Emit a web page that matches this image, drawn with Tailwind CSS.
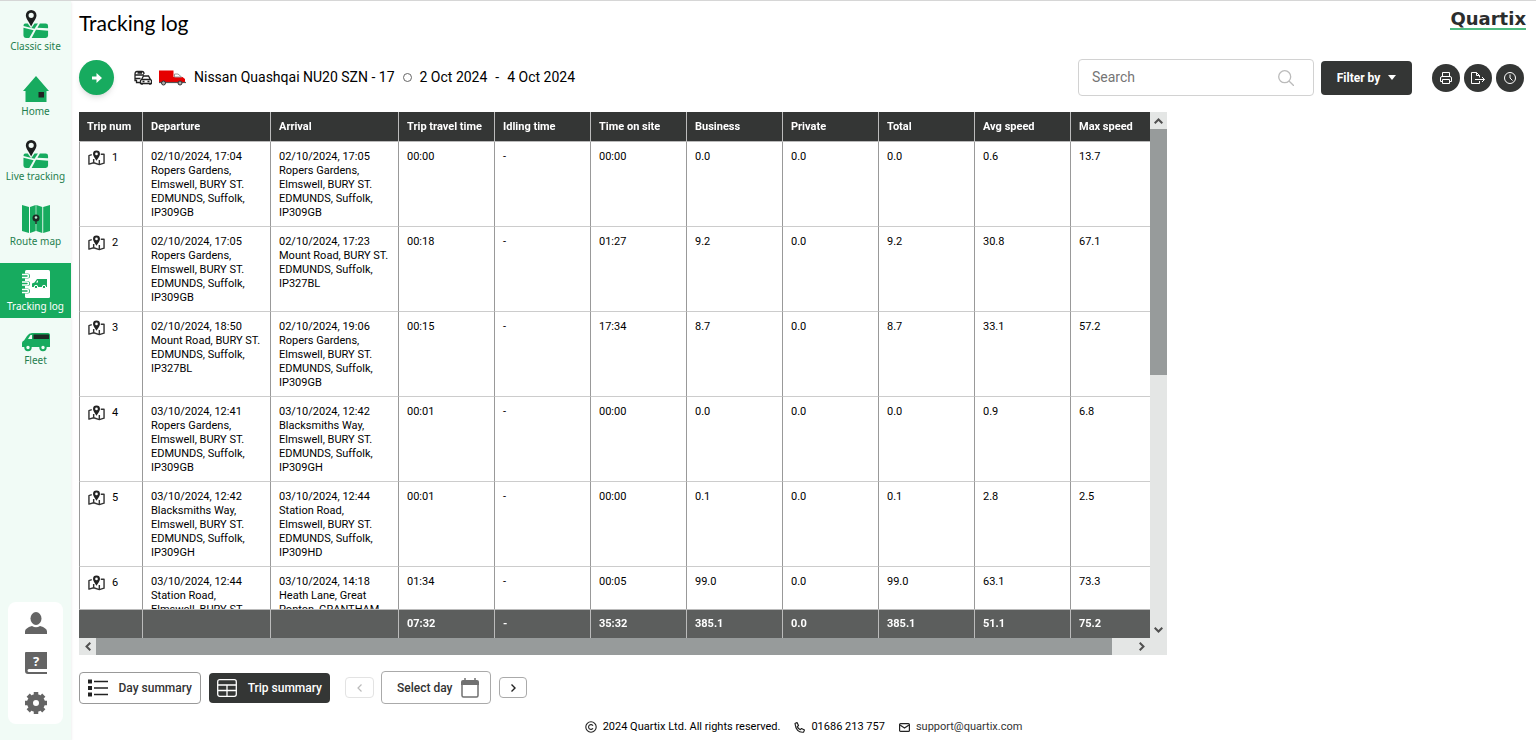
<!DOCTYPE html>
<html lang="en">

<head>
    <meta charset="UTF-8">
    <meta name="viewport" content="width=device-width, initial-scale=1.0">
    <title>Tracking log - Quartix</title>
    <script src="https://cdn.jsdelivr.net/npm/@tailwindcss/browser@4"></script>
</head>

<body class="h-screen flex overflow-hidden border-t border-[#d6d6d6] bg-white font-['Roboto',sans-serif] text-black">
    <!-- shared icons -->
    <svg class="hidden">
        <symbol id="i-tracking" viewBox="0 0 26 29">
            <path fill="#17ab5f" d="M2 14h2.500L8 19l3.500-5H15l-3.500 5.500L0 16.500Q0 14 2 14zM17 14h6q2.500 0 2.500 2.500V19l-11-.500zM0 18.500l10.500 2.500L6 29H2.500Q0 29 0 26.500zM13 20.500l12.500 1v5q0 2.500-2.500 2.500H8.500z" />
            <path fill="#1d1f1f" fill-rule="evenodd" d="M8 0a5.500 5.500 0 0 1 5.500 5.600c0 3-3 6-5.500 11.400C5.500 11.600 2.500 8.600 2.500 5.600A5.500 5.500 0 0 1 8 0zm0 2.800a2.700 2.700 0 1 0 0 5.400 2.700 2.700 0 0 0 0-5.400z" />
        </symbol>
        <symbol id="i-mappin" viewBox="0 0 18 16">
            <path fill="none" stroke="#333" stroke-width="1.500" stroke-linejoin="round" d="M4 4.500 1 5.500v9L6 13l6 2 5-1.500V4h-3.500M6 9v4M12 10v5" />
            <path fill="#222" fill-rule="evenodd" d="M9 0a3.700 3.700 0 0 1 3.700 3.700C12.700 6 10.500 8 9 11 7.500 8 5.300 6 5.300 3.700A3.700 3.700 0 0 1 9 0zm0 2.300a1.400 1.400 0 1 0 0 2.800 1.400 1.400 0 0 0 0-2.800z" />
        </symbol>
    </svg>

    <nav class="w-[71px] shrink-0 flex flex-col justify-between bg-[#f1fbf6] shadow text-[10px] leading-4 text-[#1f7f4f] text-center font-['Noto_Sans',sans-serif]">
        <div class="flex flex-col gap-2.5 pt-0.5">
            <a href="#" class="flex flex-col items-center pt-[7px] pb-1">
                <svg class="w-[26px] h-7"><use href="#i-tracking" /></svg>
                Classic site
            </a>
            <a href="#" class="flex flex-col items-center pt-[7px] pb-1">
                <svg class="w-[26px] h-7" viewBox="0 0 26 28">
                    <path fill="#17ab5f" d="M13 1 26 16h-2.500v11h-21V16H0z" />
                    <path fill="#222" d="M15.500 17h5.500v5.500h-5.500z" />
                </svg>
                Home
            </a>
            <a href="#" class="flex flex-col items-center pt-[7px] pb-1">
                <svg class="w-[26px] h-7"><use href="#i-tracking" /></svg>
                Live tracking
            </a>
            <a href="#" class="flex flex-col items-center pt-[7px] pb-1">
                <svg class="w-7 h-7" viewBox="0 0 28 28">
                    <path fill="#17ab5f" d="M0 0l7 2v26l-7-2zM8 2l5.700-2v26L8 28zM14.300 0l6 2v26l-6-2zM21.200 2 28 0v26l-6.800 2z" />
                    <circle cx="14" cy="13" r="3.500" fill="#1d2a24" />
                    <circle cx="14" cy="12.500" r="1.300" fill="#bfe8d2" />
                    <path stroke="#1d2a24" stroke-width="1.500" d="M14 15v4" />
                </svg>
                Route map
            </a>
            <a href="#" class="flex flex-col items-center pt-[7px] pb-1 bg-[#17ab5f] text-white">
                <svg class="w-7 h-7" viewBox="0 0 28 28">
                    <rect x="3" width="25" height="28" rx="1.500" fill="#fff" />
                    <path fill="none" stroke="#17ab5f" stroke-width="5" stroke-linecap="round" d="M0 6h5.500M0 13.500h5.500M0 21h5.500" />
                    <path fill="none" stroke="#fff" stroke-width="1.600" d="M0 4.500h5a1.500 1.500 0 0 1 0 3H0M0 12h5a1.500 1.500 0 0 1 0 3H0M0 19.500h5a1.500 1.500 0 0 1 0 3H0" />
                    <path fill="#17ab5f" d="M10 17v-3.500l2.500-1L15 9h10v8z" />
                    <path fill="#fff" d="M14 12.500 16 10v2.500z" />
                    <circle cx="14" cy="17" r="1.700" fill="#17ab5f" stroke="#fff" />
                    <circle cx="22" cy="17" r="1.700" fill="#17ab5f" stroke="#fff" />
                </svg>
                Tracking log
            </a>
            <a href="#" class="flex flex-col items-center pt-1 pb-1">
                <svg class="w-7 h-5" viewBox="0 0 28 20">
                    <path fill="#17ab5f" d="M10 1h16q2 0 2 2v12H0v-4q0-2 2-2.500L5 4q2-3 5-3z" />
                    <path fill="#f1fbf6" d="M6 7 8.500 3H10v4z" />
                    <path fill="#1d2a24" d="M11.500 2.500H27V7H11.500z" />
                    <circle cx="6" cy="15.500" r="2.700" fill="#f1fbf6" stroke="#17ab5f" stroke-width="2" />
                    <circle cx="21" cy="15.500" r="2.700" fill="#f1fbf6" stroke="#17ab5f" stroke-width="2" />
                </svg>
                Fleet
            </a>
        </div>
        <div class="mx-2 mb-4 py-2.5 rounded-lg bg-white flex flex-col items-center gap-[18px]">
            <button aria-label="Account">
                <svg class="w-[22px] h-[22px]" viewBox="0 0 22 22" fill="#646464">
                    <ellipse cx="11" cy="6.500" rx="5.500" ry="6.500" />
                    <path d="M0 22v-2.500Q0 16 7 14q4 2.500 8 0 7 2 7 5.500V22z" />
                </svg>
            </button>
            <button aria-label="Help">
                <svg class="w-[22px] h-[22px]" viewBox="0 0 22 22">
                    <path fill="#646464" d="M1 0h21v17H4a1.500 1.500 0 0 0 0 3h18v2H3q-3 0-3-3V1q0-1 1-1z" />
                    <text x="11" y="13.500" fill="#fff" font-size="13" font-weight="700" text-anchor="middle">?</text>
                </svg>
            </button>
            <button aria-label="Settings">
                <svg class="w-[22px] h-[22px]" viewBox="0 0 22 22">
                    <circle cx="11" cy="11" r="6" fill="none" stroke="#646464" stroke-width="6" />
                    <path stroke="#646464" stroke-width="4.500" d="M11 0v4M11 18v4M0 11h4M18 11h4M3.200 3.200 6 6M16 16l2.800 2.800M3.200 18.800 6 16M16 6l2.800-2.800" />
                </svg>
            </button>
        </div>
    </nav>

    <main class="flex-1 min-w-0 flex flex-col pl-2">
        <header class="h-[43px] shrink-0 flex items-start justify-between pt-1.5 pr-2.5">
            <h1 class="font-['Lato',sans-serif] text-[21px] leading-8">Tracking log</h1>
            <a href="#" class="mt-0.5 border-b-2 border-[#4dbb80] font-['DejaVu_Sans',sans-serif] font-bold text-[18px] leading-[19px] text-[#2b2d2d]">Quartix</a>
        </header>

        <div class="h-[67px] mb-px shrink-0 flex items-center justify-between pr-3">
            <div class="flex items-center text-[14px]">
                <button aria-label="Next vehicle" class="w-[35px] h-[35px] rounded-full bg-[#17ab5f] shadow-md flex items-center justify-center">
                    <svg class="w-3 h-3" viewBox="0 0 12 12"><path fill="#fff" d="M1 4.500h4.500V1L11 6l-5.500 5V7.500H1z" /></svg>
                </button>
                <svg class="ml-5 w-[18px] h-4" viewBox="0 0 18 16" fill="none" stroke="#222" stroke-width="1.300">
                    <path d="M7 12.500H2.500v-2H1V4q0-2.500 2-2.500h5q2 0 2 2.500M1 5h9M1 8.500h5.500M3.500 3H8" />
                    <path d="M7.500 9.500 9.500 6h5l2 3.500 1 1v3H6.500v-3zM7.500 9.500h9M8 13.500V15M16 13.500V15M8.500 11.500h2M13.500 11.500h2" />
                </svg>
                <svg class="ml-[7px] w-[27px] h-4" viewBox="0 0 27 16">
                    <path fill="#e60000" d="M0 .500h14.500V12H0zM14.500 7h9l2.500 2v3.500H14.500z" />
                    <path fill="#fff" stroke="#999" d="M15.500 7V4H19l3.500 3z" />
                    <path stroke="#555" stroke-width="1.200" d="M0 12.500h27" />
                    <circle cx="4.500" cy="13" r="2" fill="#aaa" stroke="#333" />
                    <circle cx="21" cy="13" r="2" fill="#aaa" stroke="#333" />
                </svg>
                <span class="ml-2">Nissan Quashqai NU20 SZN - 17</span>
                <span class="mx-2 w-[9px] h-[9px] rounded-full border border-[#666]"></span>
                <span>2 Oct 2024</span>
                <span class="mx-2">-</span>
                <span>4 Oct 2024</span>
            </div>
            <div class="flex items-center">
                <label class="w-[236px] h-[37px] px-[13px] flex items-center border border-[#d2d2d2] rounded">
                    <input type="text" aria-label="Search" placeholder="Search" class="flex-1 min-w-0 text-[14px] outline-none placeholder:text-[#757575]">
                    <svg class="mr-1.5 w-4 h-4" viewBox="0 0 16 16" fill="none" stroke="#bbb" stroke-width="1.300"><circle cx="6.700" cy="6.700" r="6" /><path d="m11 11 5 5" /></svg>
                </label>
                <button class="ml-[7px] w-[91px] h-[34px] rounded bg-[#343635] text-white text-[12px] font-bold flex items-center justify-center gap-2">
                    Filter by
                    <svg class="w-2 h-[5px]" viewBox="0 0 8 5"><path fill="#fff" d="M0 0h8L4 5z" /></svg>
                </button>
                <div class="ml-5 flex gap-1">
                    <button aria-label="Print" class="w-7 h-7 rounded-full bg-[#343635] flex items-center justify-center">
                        <svg class="w-3 h-3" viewBox="0 0 12 12" fill="none" stroke="#fff"><path d="M2.500 4V.500h7V4M2.500 9.500h-2V6q0-1.500 1.500-1.500h8q1.500 0 1.500 1.500v3.500h-2M2.500 7.500h7v4h-7z" /></svg>
                    </button>
                    <button aria-label="Export" class="w-7 h-7 rounded-full bg-[#343635] flex items-center justify-center">
                        <svg class="w-3.5 h-3" viewBox="0 0 14 12" fill="none" stroke="#fff"><path d="M8.500 9v2.500h-8V.500h5l3 3v2M5.500.500v3h3M4 7.500h9.500M11 5l2.500 2.500L11 10" /></svg>
                    </button>
                    <button aria-label="History" class="w-7 h-7 rounded-full bg-[#343635] flex items-center justify-center">
                        <svg class="w-3 h-3" viewBox="0 0 12 12" fill="none" stroke="#fff"><circle cx="6" cy="6" r="5.500" /><path d="M6 2.500V6l2.500 2.500" /></svg>
                    </button>
                </div>
            </div>
        </div>

        <!-- trips table with its scroll bars -->
        <div class="flex-1 min-h-0 w-full max-w-[1088px] grid grid-cols-[minmax(0,1fr)_17px] grid-rows-[minmax(0,1fr)_17px] bg-[#e4e6e5]">
            <div class="overflow-hidden bg-white">
                <table class="w-[1088px] table-fixed border-separate border-spacing-0 text-[11px] leading-[14px] text-left">
                    <colgroup>
                        <col class="w-16">
                        <col class="w-32">
                        <col class="w-32">
                        <col span="8" class="w-24">
                    </colgroup>
                    <thead id="trip-head" class="sticky top-0 bg-[#343635] text-white"></thead>
                    <tbody id="trip-rows"></tbody>
                    <tfoot id="trip-totals" class="sticky bottom-0 bg-[#5c5e5d] text-white"></tfoot>
                </table>
            </div>
            <div class="flex flex-col">
                <button aria-label="Scroll up" class="h-[17px] flex items-center justify-center">
                    <svg class="w-[9px] h-[6px]" viewBox="0 0 9 6" fill="none" stroke="#505050" stroke-width="2"><path d="M.700 5.300 4.500 1.500l3.800 3.800" /></svg>
                </button>
                <div class="flex-1"><div class="h-1/2 bg-[#979b9b]"></div></div>
                <button aria-label="Scroll down" class="h-[17px] flex items-center justify-center">
                    <svg class="w-[9px] h-[6px]" viewBox="0 0 9 6" fill="none" stroke="#505050" stroke-width="2"><path d="M.700.700 4.500 4.500 8.300.700" /></svg>
                </button>
            </div>
            <div class="flex">
                <button aria-label="Scroll left" class="w-[17px] flex items-center justify-center">
                    <svg class="w-[6px] h-[9px]" viewBox="0 0 6 9" fill="none" stroke="#505050" stroke-width="2"><path d="M5.300.700 1.500 4.500l3.800 3.800" /></svg>
                </button>
                <div class="flex-1"><div class="w-[98%] h-full bg-[#979b9b]"></div></div>
                <button aria-label="Scroll right" class="w-[17px] flex items-center justify-center">
                    <svg class="w-[6px] h-[9px]" viewBox="0 0 6 9" fill="none" stroke="#505050" stroke-width="2"><path d="M.700.700 4.500 4.500.700 8.300" /></svg>
                </button>
            </div>
        </div>

        <div class="h-[65px] shrink-0 flex items-center text-[12px] font-medium text-[#333]">
            <button class="w-[122px] h-8 px-2 flex items-center justify-between border border-[#999] rounded">
                <svg class="w-5 h-[18px]" viewBox="0 0 20 18" fill="none" stroke="#222"><path d="M6 2.500h14M6 9h14M6 15.500h14" stroke-width="1.600" /><path stroke-width="4" d="M0 2.500h4M0 9h4M0 15.500h4" /></svg>
                Day summary
            </button>
            <button class="ml-2 w-[121px] h-[30px] px-2 flex items-center justify-between rounded bg-[#343635] text-white">
                <svg class="w-5 h-[18px]" viewBox="0 0 20 18" fill="none" stroke="#fff" stroke-width="1.300"><rect x=".700" y=".700" width="18.600" height="16.600" rx="2" /><path d="M1 6h18M1 11.500h18M10 6v11" /></svg>
                Trip summary
            </button>
            <button disabled aria-label="Previous day" class="ml-[15px] w-[29px] h-[21px] flex items-center justify-center border border-[#e3e3e3] rounded-sm">
                <svg class="w-[5px] h-2" viewBox="0 0 5 8" fill="none" stroke="#bbb" stroke-width="1.200"><path d="M4.500.500 1 4l3.500 3.500" /></svg>
            </button>
            <button class="ml-[7px] w-[110px] h-[33px] pl-[15px] pr-[11px] flex items-center justify-between border border-[#aaa] rounded">
                Select day
                <svg class="w-[18px] h-5" viewBox="0 0 18 20"><path fill="none" stroke="#707070" stroke-width="1.500" d="M1 5v12.500q0 1.500 1.500 1.500h13q1.500 0 1.500-1.500V5" /><path fill="#707070" d="M2 2h14q2 0 2 2v3H0V4q0-2 2-2z" /><path stroke="#707070" stroke-width="1.500" d="M4 0v3M14 0v3" /></svg>
            </button>
            <button aria-label="Next day" class="ml-2 w-7 h-[21px] flex items-center justify-center border border-[#aaa] rounded-sm">
                <svg class="w-[5px] h-2" viewBox="0 0 5 8" fill="none" stroke="#222" stroke-width="1.400"><path d="M.500.500 4 4 .500 7.500" /></svg>
            </button>
        </div>

        <footer class="h-5 shrink-0 pb-1.5 pr-2 flex items-center justify-center text-[11px] leading-3">
            <svg class="w-3 h-3" viewBox="0 0 12 12" fill="none" stroke="#222" stroke-width="1.100"><circle cx="6" cy="6" r="5.200" /><path d="M8 4.700a2.400 2.400 0 1 0 0 2.600" /></svg>
            <span class="ml-1.5">2024 Quartix Ltd. All rights reserved.</span>
            <svg class="ml-3.5 w-[11px] h-[11px]" viewBox="0 0 11 11" fill="none" stroke="#222" stroke-width="1.200" stroke-linejoin="round"><path d="m1 1.500 2-1L4.500 3.500 3.300 4.700q1 2 3 3L7.500 6.500l3 1.500-1 2.200Q2 11 1 1.500z" /></svg>
            <a href="tel:01686213757" class="ml-1.5">01686 213 757</a>
            <svg class="ml-3.5 w-[11px] h-[9px]" viewBox="0 0 11 9" fill="none" stroke="#222" stroke-width="1.200"><rect x=".600" y=".600" width="9.800" height="7.800" rx="1" /><path d="m1 2 4.500 3L10 2" /></svg>
            <a href="mailto:support@quartix.com" class="ml-1.5 text-[#333]">support@quartix.com</a>
        </footer>
    </main>

    <script>
        const columns = ['Trip num', 'Departure', 'Arrival', 'Trip travel time', 'Idling time', 'Time on site', 'Business', 'Private', 'Total', 'Avg speed', 'Max speed'];
        const gardens = 'Ropers Gardens, Elmswell, BURY ST. EDMUNDS, Suffolk, IP309GB';
        const mount = 'Mount Road, BURY ST. EDMUNDS, Suffolk, IP327BL';
        const blacksmiths = 'Blacksmiths Way, Elmswell, BURY ST. EDMUNDS, Suffolk, IP309GH';
        const station = 'Station Road, Elmswell, BURY ST. EDMUNDS, Suffolk, IP309HD';
        const trips = [
            ['02/10/2024, 17:04', gardens, '02/10/2024, 17:05', gardens, '00:00', '-', '00:00', '0.0', '0.0', '0.0', '0.6', '13.7'],
            ['02/10/2024, 17:05', gardens, '02/10/2024, 17:23', mount, '00:18', '-', '01:27', '9.2', '0.0', '9.2', '30.8', '67.1'],
            ['02/10/2024, 18:50', mount, '02/10/2024, 19:06', gardens, '00:15', '-', '17:34', '8.7', '0.0', '8.7', '33.1', '57.2'],
            ['03/10/2024, 12:41', gardens, '03/10/2024, 12:42', blacksmiths, '00:01', '-', '00:00', '0.0', '0.0', '0.0', '0.9', '6.8'],
            ['03/10/2024, 12:42', blacksmiths, '03/10/2024, 12:44', station, '00:01', '-', '00:00', '0.1', '0.0', '0.1', '2.8', '2.5'],
            ['03/10/2024, 12:44', station, '03/10/2024, 14:18', 'Heath Lane, Great Ponton, GRANTHAM', '01:34', '-', '00:05', '99.0', '0.0', '99.0', '63.1', '73.3']
        ];
        const totals = ['', '', '', '07:32', '-', '35:32', '385.1', '0.0', '385.1', '51.1', '75.2'];
        const cell = 'h-[85px] px-2 pt-2 pb-1.5 align-top border-r border-b border-r-[#999] border-b-[#ccc]';

        document.getElementById('trip-head').innerHTML = '<tr>' + columns.map(c =>
            `<th class="h-[30px] px-2 border-r border-b border-[#bbb] font-bold whitespace-nowrap">${c}</th>`).join('') + '</tr>';

        document.getElementById('trip-rows').innerHTML = trips.map(([depTime, dep, arrTime, arr, ...values], i) => `<tr>
            <td class="${cell} border-l border-l-[#999]"><span class="flex items-center gap-[7px]"><svg class="w-[17px] h-4"><use href="#i-mappin" /></svg>${i + 1}</span></td>
            <td class="${cell}">${depTime}<br>${dep}</td>
            <td class="${cell}">${arrTime}<br>${arr}</td>
            ${values.map(v => `<td class="${cell}">${v}</td>`).join('')}
        </tr>`).join('');

        document.getElementById('trip-totals').innerHTML = '<tr>' + totals.map(t =>
            `<td class="h-[29px] px-2 border-t border-r border-[#bbb] font-bold">${t}</td>`).join('') + '</tr>';
    </script>
</body>

</html>
